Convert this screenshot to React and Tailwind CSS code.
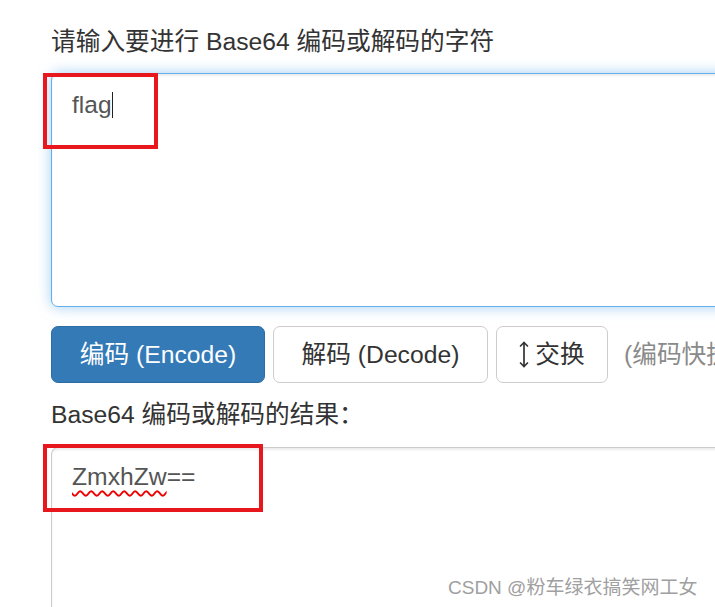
import React from 'react';

const font = { fontFamily: '"Liberation Sans", "Noto Sans CJK SC", sans-serif' };

function SwapIcon() {
  return (
    <svg width="10" height="27" viewBox="0 0 10 27" fill="none" stroke="#333" strokeWidth="1.7" strokeLinecap="round" strokeLinejoin="round">
      <path d="M5 1.5v24" />
      <path d="M1.5 5l3.5-3.5 3.5 3.5" />
      <path d="M1.5 22l3.5 3.5 3.5-3.5" />
    </svg>
  );
}

export default function App() {
  return (
    <div className="relative w-[715px] h-[607px] overflow-hidden bg-white text-[#333]" style={font}>
      <div className="w-[1000px] pl-[51px] pt-[25px]">
        <div className="text-[24.7px] leading-[34px]">请输入要进行 Base64 编码或解码的字符</div>

        <div className="mt-[14px] h-[234px] rounded-[7px] border-[1.7px] border-[#66afe9] bg-white pl-[20px] pt-[14px] text-[24.5px] leading-[34px] text-[#555] shadow-[inset_0_2px_2px_rgba(0,0,0,0.075),0_0_14px_rgba(102,175,233,0.6)]">
          <span>flag</span>
          <span className="inline-block w-[1px] h-[26px] bg-[#222] align-[-5px]" />
        </div>

        <div className="mt-[19px] flex items-center gap-[8px] text-[24.7px]">
          <button type="button" className="flex h-[57px] w-[214px] items-center justify-center rounded-[7px] border-[1.7px] border-[#2e6da4] bg-[#337ab7] text-white">
            编码 (Encode)
          </button>
          <button type="button" className="flex h-[57px] w-[215px] items-center justify-center rounded-[7px] border-[1.7px] border-[#ccc] bg-white text-[#333]">
            解码 (Decode)
          </button>
          <button type="button" className="flex h-[57px] w-[112px] items-center justify-center gap-[6px] rounded-[7px] border-[1.7px] border-[#ccc] bg-white text-[#333]">
            <SwapIcon />
            <span>交换</span>
          </button>
          <span className="ml-[8px] whitespace-nowrap text-[#8a8a8a]">(编码快捷键：Ctrl + Enter)</span>
        </div>

        <div className="mt-[15px] text-[24.7px] leading-[34px]">Base64 编码或解码的结果：</div>

        <div className="mt-[15px] h-[300px] rounded-tl-[7px] border-l-[1.7px] border-t-[1.7px] border-[#ccc] bg-white pl-[20px] pt-[12px] text-[24.7px] leading-[34px] text-[#555] shadow-[inset_0_2px_2px_rgba(0,0,0,0.075)]">
          <span className="underline decoration-wavy decoration-[#e00] decoration-[1.5px] underline-offset-[5px]">ZmxhZw</span>
          <span>==</span>
        </div>
      </div>

      <div className="pointer-events-none absolute left-[43px] top-[73px] h-[76px] w-[115px] border-[4px] border-[#e8161d]" />
      <div className="pointer-events-none absolute left-[43px] top-[444px] h-[68px] w-[220px] border-[4px] border-[#e8161d]" />

      <div className="absolute left-[448px] top-[576px] whitespace-nowrap text-[19px] leading-[24px] text-[#a0a0a0]">
        CSDN @粉车绿衣搞笑网工女
      </div>
    </div>
  );
}
